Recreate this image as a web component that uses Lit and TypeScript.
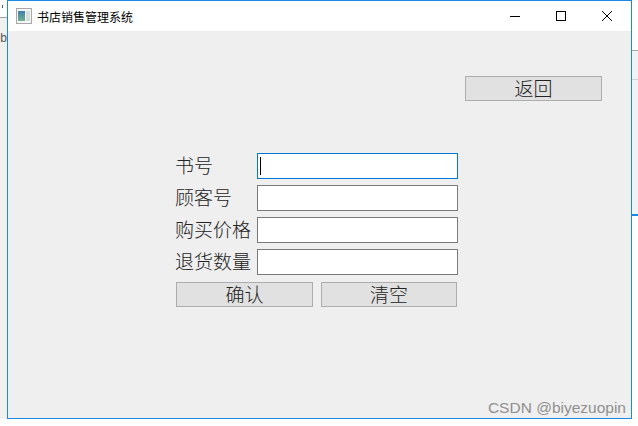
import { LitElement, html, css } from 'lit';
import { customElement } from 'lit/decorators.js';

@customElement('app-root')
export class AppRoot extends LitElement {
  static styles = css`
    :host {
      display: block;
      position: relative;
      width: 638px;
      height: 426px;
      overflow: hidden;
      background: #fff;
      font-family: 'Liberation Serif', 'Noto Sans CJK SC', serif;
      color: #222;
    }
    .behind-left {
      position: absolute;
      left: 0;
      top: 17px;
      width: 7px;
      height: 402px;
      background: #f0f0f0;
      border-top: 1px solid #a0a0a0;
      box-sizing: border-box;
    }
    .behind-left span {
      position: absolute;
      top: 13px;
      right: 0;
      font: 12px 'Liberation Sans', sans-serif;
      color: #555;
      width: 7px;
      overflow: hidden;
      direction: rtl;
    }
    .mark {
      position: absolute;
      left: 2px;
      top: 5px;
      width: 1px;
      height: 3px;
      background: #555;
    }
    .behind-right {
      position: absolute;
      left: 632px;
      top: 50px;
      width: 6px;
      height: 166px;
      box-sizing: border-box;
      background: #f2f2f2;
      border-top: 1px solid #a8a8a8;
      border-bottom: 2px solid #1e88e0;
    }
    .behind-right i {
      display: block;
      height: 1px;
      margin-top: 28px;
      background: #d0d0d0;
    }
    .window {
      position: absolute;
      left: 7px;
      top: 0;
      width: 625px;
      height: 419px;
      box-sizing: border-box;
      border: 1px solid #1e88e0;
      display: flex;
      flex-direction: column;
      background: #efefef;
    }
    .titlebar {
      height: 30px;
      flex: none;
      background: #fff;
      display: flex;
      align-items: center;
      padding-left: 8px;
      color: #000;
      font: 12px 'Noto Sans CJK SC', sans-serif;
    }
    .titlebar .app-icon {
      width: 16px;
      height: 16px;
      margin-right: 5px;
    }
    .controls {
      margin-left: auto;
      display: flex;
      padding-right: 1px;
    }
    .controls button {
      width: 46px;
      height: 30px;
      padding: 0;
      border: 0;
      background: none;
      display: flex;
      align-items: center;
      justify-content: center;
    }
    .body {
      flex: 1;
      position: relative;
      display: flex;
      flex-direction: column;
    }
    .top-row {
      display: flex;
      justify-content: flex-end;
      padding: 45px 29px 0 0;
    }
    .btn {
      box-sizing: border-box;
      height: 25px;
      width: 137px;
      padding: 0 0 2px;
      background: #e1e1e1;
      border: 1px solid #adadad;
      color: #222;
      font: 300 19px/21px 'Noto Sans CJK SC', serif;
      display: flex;
      align-items: center;
      justify-content: center;
    }
    .form {
      display: grid;
      grid-template-columns: 81px 201px;
      grid-auto-rows: 26px;
      row-gap: 6px;
      margin: 52px 0 0 168px;
      width: 282px;
    }
    .form label {
      font: 300 19px/24px 'Noto Sans CJK SC', serif;
      color: #222;
      white-space: nowrap;
      margin-left: -1px;
    }
    .form .input {
      box-sizing: border-box;
      background: #fff;
      border: 1px solid #7a7a7a;
      display: flex;
      align-items: center;
      padding-left: 2px;
    }
    .form .input.focus {
      border-color: #0078d7;
    }
    .caret {
      width: 1px;
      height: 18px;
      background: #000;
    }
    .actions {
      display: flex;
      gap: 8px;
      margin: 7px 0 0 168px;
    }
    .actions .btn:last-child {
      width: 136px;
    }
    .watermark {
      position: absolute;
      right: 5px;
      bottom: 1px;
      font: 15.5px/18px 'Liberation Sans', sans-serif;
      color: #8f8f8f;
      white-space: nowrap;
    }
  `;

  render() {
    const labels = ['书号', '顾客号', '购买价格', '退货数量'];
    return html`
      <div class="mark"></div>
      <div class="behind-left"><span>ub</span></div>
      <div class="behind-right"><i></i></div>
      <div class="window">
        <div class="titlebar">
          <svg class="app-icon" viewBox="0 0 16 16">
            <defs>
              <linearGradient id="pane" x1="0" y1="0" x2="0" y2="1">
                <stop offset="0" stop-color="#3f7fb0" />
                <stop offset="1" stop-color="#6fb08c" />
              </linearGradient>
            </defs>
            <rect x="0.5" y="0.5" width="15" height="15" fill="#f6f6f6" stroke="#a8a8a8" />
            <rect x="2" y="3" width="7" height="10" fill="url(#pane)" />
            <rect x="10" y="3" width="4" height="10" fill="#d5dedb" />
          </svg>
          书店销售管理系统
          <div class="controls">
            <button>
              <svg width="10" height="10" viewBox="0 0 10 10"><path d="M0 5.5h10" stroke="#000" fill="none" /></svg>
            </button>
            <button>
              <svg width="10" height="10" viewBox="0 0 10 10"><rect x="0.5" y="0.5" width="9" height="9" stroke="#000" fill="none" /></svg>
            </button>
            <button>
              <svg width="10" height="10" viewBox="0 0 10 10"><path d="M0 0l10 10M10 0L0 10" stroke="#000" stroke-width="1" fill="none" /></svg>
            </button>
          </div>
        </div>
        <div class="body">
          <div class="top-row"><div class="btn">返回</div></div>
          <div class="form">
            ${labels.map(
              (l, i) => html`
                <label>${l}</label>
                <div class="input ${i === 0 ? 'focus' : ''}">
                  ${i === 0 ? html`<div class="caret"></div>` : ''}
                </div>
              `,
            )}
          </div>
          <div class="actions">
            <div class="btn">确认</div>
            <div class="btn">清空</div>
          </div>
          <div class="watermark">CSDN @biyezuopin</div>
        </div>
      </div>
    `;
  }
}
